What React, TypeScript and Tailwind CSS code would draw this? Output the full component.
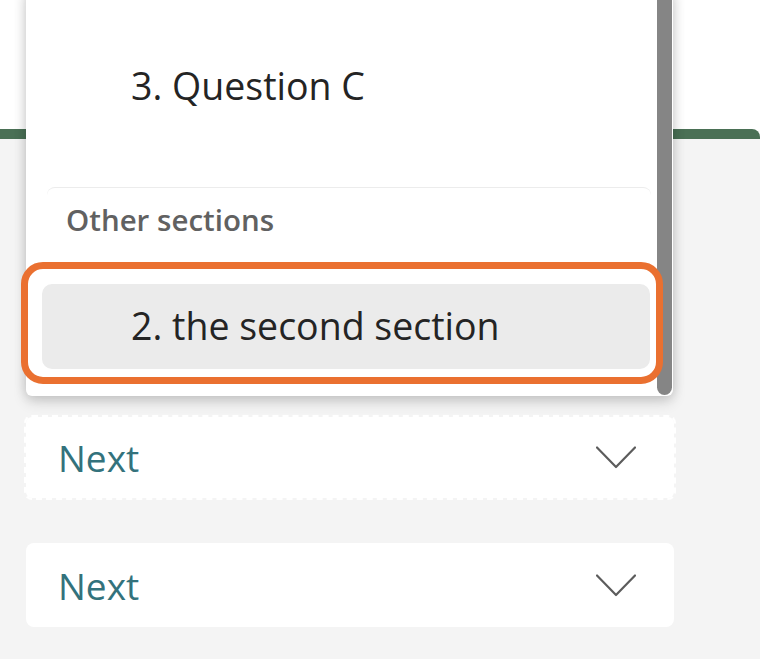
import React from "react";

function Chevron() {
  return (
    <svg width="40" height="23" viewBox="0 0 40 23" fill="none">
      <polyline points="1,1.5 20,21 39,1.5" stroke="#5c5c5c" strokeWidth="2.2" strokeLinecap="round" strokeLinejoin="round" />
    </svg>
  );
}

export default function App() {
  return (
    <div className="relative w-[768px] h-[659px] overflow-hidden bg-white font-['Open_Sans',sans-serif]">
      <div className="pt-[129px] pr-[8px]">
        <div className="h-[10px] bg-[#4a7055] rounded-tr-[8px]" />
        <div className="h-[530px] bg-[#f4f4f4] pl-[24px] pr-[84px] pt-[276px]">
          <div className="h-[85px] flex items-center justify-between rounded-[8px] border-2 border-dashed border-white bg-white bg-clip-padding pl-[32px] pr-[38px]">
            <span className="text-[37px] leading-none text-[#33727c]">Next</span>
            <Chevron />
          </div>
          <div className="mt-[43px] mx-[2px] h-[84px] flex items-center justify-between rounded-[8px] bg-white pl-[32px] pr-[38px]">
            <span className="text-[37px] leading-none text-[#33727c]">Next</span>
            <Chevron />
          </div>
        </div>
      </div>

      <div className="absolute left-[26px] top-[-10px] w-[647px] h-[406px] flex bg-white rounded-b-[6px] shadow-[0_0_12px_rgba(0,0,0,0.14),0_6px_14px_rgba(0,0,0,0.14)]">
        <div className="flex-1 flex flex-col">
          <div className="mt-[54px] ml-[16px] mr-[7px] h-[85px] flex items-center pl-[89px] text-[37.5px] text-[#242424]">
            3. Question C
          </div>
          <div className="mt-[58px] ml-[21px] mr-[6px] h-[65px] flex items-center pl-[19px] border-t border-[#ececec] rounded-t-[8px] text-[29.5px] font-semibold text-[#616161]">
            Other sections
          </div>
          <div className="relative mt-[32px] ml-[16px] mr-[7px] h-[85px] flex items-center pl-[89px] rounded-[10px] bg-[#ebebeb] text-[37.5px] text-[#242424]">
            2. the second section
            <div className="absolute z-10 -left-[21px] -top-[22px] -right-[13px] -bottom-[15px] rounded-[22px] border-[7px] border-[#ea7030]" />
          </div>
        </div>
        <div className="w-[15px] mr-[1px] mb-[1px] bg-[#858585] rounded-b-[8px]" />
      </div>
    </div>
  );
}
